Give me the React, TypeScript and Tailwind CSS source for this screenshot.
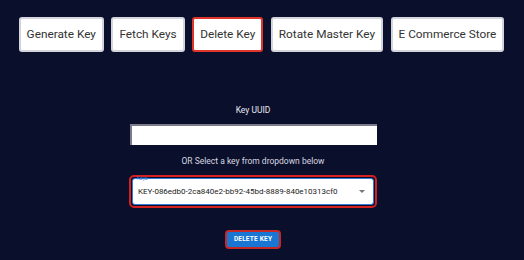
const tabs = ["Generate Key", "Fetch Keys", "Delete Key", "Rotate Master Key", "E Commerce Store"];

const App = () => {
  return (
    <div className="w-[524px] h-[260px] bg-[#0a0f2b] font-['Roboto',sans-serif] flex flex-col items-center overflow-hidden">
      <div className="flex gap-[7.5px] pt-[17px] pr-[1px]">
        {tabs.map((t) => (
          <button
            key={t}
            className={`shrink-0 whitespace-nowrap h-[35px] px-[6px] bg-white rounded-[3px] text-[11.8px] text-[#333] border-2 ${
              t === "Delete Key" ? "border-[#e0352b]" : "border-[#d4d4dc]"
            }`}
          >
            {t}
          </button>
        ))}
      </div>

      <div className="flex flex-col items-center w-full pr-[18px]">
        <p className="mt-[52px] text-[8.5px] text-[#e8e8ee] leading-[12px]">Key UUID</p>
        <input
          className="mt-[8px] w-[247px] h-[21px] bg-white border-l-2 border-t-2 border-[#7a7a88] outline-none"
          type="text"
        />
        <p className="mt-[10px] text-[8.5px] text-[#d8d8e0] leading-[12px]">OR Select a key from dropdown below</p>

        <div className="mt-[8px] w-[248px] h-[33px] rounded-[5px] border-2 border-[#d42020] p-[1px]">
          <div className="relative h-full bg-white rounded-[3px] border border-[#2f7ad6] flex items-center pl-[5px] pr-[8px]">
            <span className="absolute left-[4px] -top-[4px] text-[5px] text-[#2f7ad6] leading-[6px]">Keys</span>
            <span className="whitespace-nowrap text-[8px] text-[#222] flex-1">KEY-086edb0-2ca840e2-bb92-45bd-8889-840e10313cf0</span>
            <span className="w-0 h-0 border-l-[3px] border-r-[3px] border-t-[3px] border-l-transparent border-r-transparent border-t-[#777]" />
          </div>
        </div>

        <button className="mt-[22px] w-[56px] h-[19px] rounded-[4px] bg-[#1976d2] border-2 border-[#c62828] text-white text-[6.5px] font-bold tracking-[0.2px] whitespace-nowrap">
          DELETE KEY
        </button>
      </div>
    </div>
  );
};

export default App;
